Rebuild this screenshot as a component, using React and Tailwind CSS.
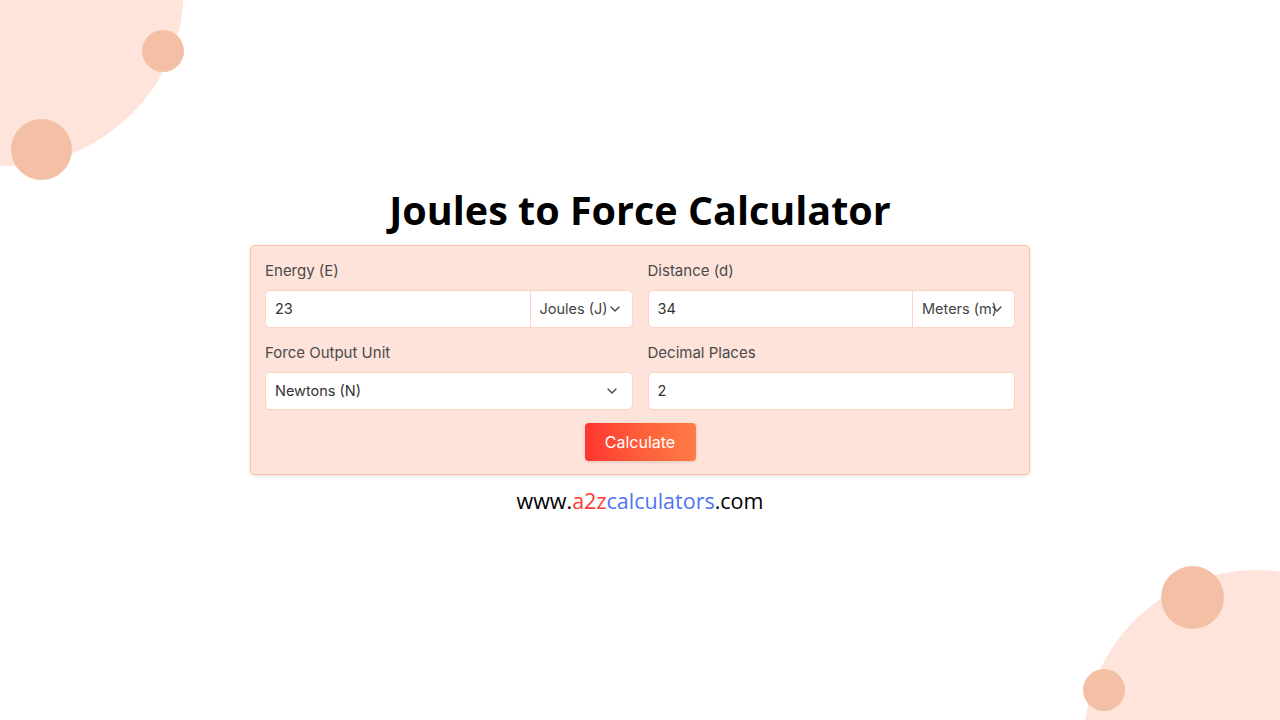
import React from 'react';

function Chevron() {
  return (
    <svg className="w-4 h-4 text-[#444]" viewBox="0 0 24 24" fill="none" stroke="currentColor" strokeWidth="2" strokeLinecap="round" strokeLinejoin="round">
      <path d="M6 9l6 6 6-6" />
    </svg>
  );
}

function UnitField({ label, value, unit }) {
  return (
    <div className="flex flex-col">
      <label className="text-[15px] text-[#4a4a4a] mb-[9px] leading-[20px]">{label}</label>
      <div className="flex h-[38px] bg-white border border-[#fcd3c4] rounded-[5px]">
        <div className="flex-1 flex items-center px-[9px] text-[14.5px] text-[#333]">{value}</div>
        <div className="relative w-[102px] flex items-center pl-[9px] border-l border-[#fcd3c4] text-[14.5px] text-[#444] overflow-hidden whitespace-nowrap">
          <span>{unit}</span>
          <span className="absolute right-[9px] top-[10px] bg-transparent">
            <Chevron />
          </span>
        </div>
      </div>
    </div>
  );
}

export default function App() {
  return (
    <div className="relative w-[1280px] h-[720px] overflow-hidden bg-white" style={{ fontFamily: 'Inter, sans-serif' }}>
      {/* decorative circles */}
      <div className="absolute w-[356px] h-[356px] left-[-172px] top-[-190px] rounded-full bg-[#fee4da]" />
      <div className="absolute w-[42px] h-[42px] left-[142px] top-[30px] rounded-full bg-[#f4c0a5]" />
      <div className="absolute w-[61px] h-[61px] left-[11px] top-[119px] rounded-full bg-[#f4c0a5]" />
      <div className="absolute w-[344px] h-[344px] left-[1084px] top-[570px] rounded-full bg-[#fee4da]" />
      <div className="absolute w-[63px] h-[63px] left-[1161px] top-[566px] rounded-full bg-[#f4c0a5]" />
      <div className="absolute w-[42px] h-[42px] left-[1083px] top-[669px] rounded-full bg-[#f4c0a5]" />

      <div className="relative flex flex-col items-center pt-[184px]">
        <h1 className="text-[39.5px] font-bold text-black leading-[52px]" style={{ fontFamily: '"Open Sans", sans-serif' }}>
          Joules to Force Calculator
        </h1>

        <div className="mt-[9px] w-[780px] bg-[#fee3da] border border-[#fbc3ae] rounded-[5px] shadow-[0_1px_4px_rgba(0,0,0,0.12)] px-[14px] pt-[15px] pb-[13px]">
          <div className="grid grid-cols-2 gap-x-[15px] gap-y-[15px]">
            <UnitField label="Energy (E)" value="23" unit="Joules (J)" />
            <UnitField label="Distance (d)" value="34" unit="Meters (m)" />
            <div className="flex flex-col">
              <label className="text-[15px] text-[#4a4a4a] mb-[9px] leading-[20px]">Force Output Unit</label>
              <div className="flex items-center justify-between h-[38px] bg-white border border-[#fcd3c4] rounded-[5px] pl-[9px] pr-[12px] text-[14.5px] text-[#333]">
                <span>Newtons (N)</span>
                <Chevron />
              </div>
            </div>
            <div className="flex flex-col">
              <label className="text-[15px] text-[#4a4a4a] mb-[9px] leading-[20px]">Decimal Places</label>
              <div className="flex items-center h-[38px] bg-white border border-[#fcd3c4] rounded-[5px] px-[9px] text-[14.5px] text-[#333]">2</div>
            </div>
          </div>
          <div className="flex justify-center mt-[13px]">
            <button className="w-[111px] h-[38px] rounded-[4px] bg-gradient-to-r from-[#ff3330] to-[#ff7c45] text-white text-[16px] shadow-[0_1px_3px_rgba(0,0,0,0.15)]">
              Calculate
            </button>
          </div>
        </div>

        <p className="mt-[11px] text-[21.5px] text-black leading-[30px]" style={{ fontFamily: '"Open Sans", sans-serif' }}>
          www.<span className="text-[#ff3b2f]">a2z</span><span className="text-[#4f74f0]">calculators</span>.com
        </p>
      </div>
    </div>
  );
}
